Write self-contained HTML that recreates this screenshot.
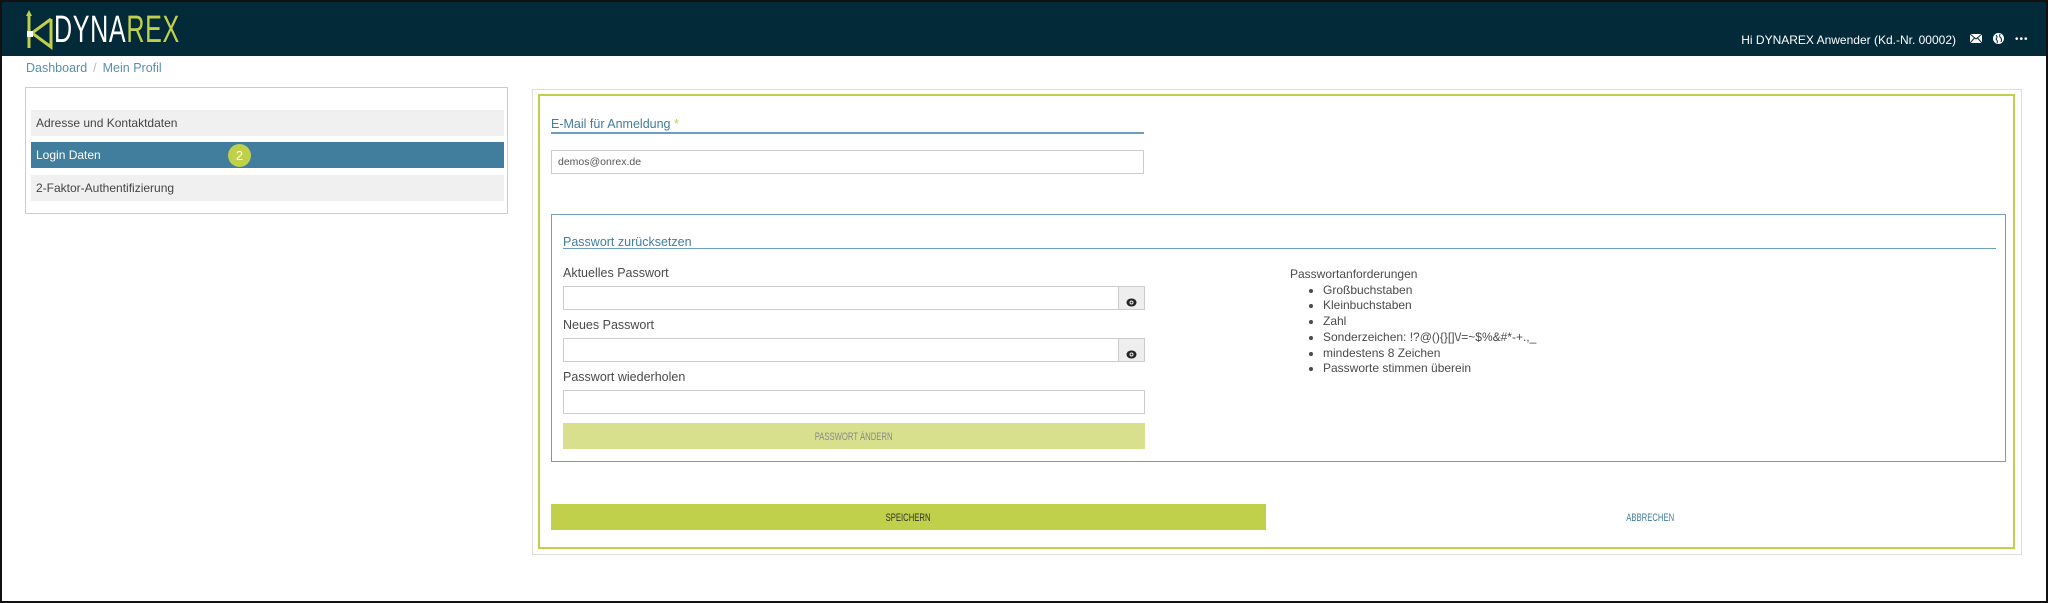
<!DOCTYPE html>
<html><head><meta charset="utf-8"><style>
*{box-sizing:border-box;margin:0;padding:0}
body{width:2048px;height:603px;overflow:hidden;background:#fff;font-family:"Liberation Sans",sans-serif;font-size:12px;color:#4a4a4a;position:relative}
.frame{position:absolute;left:0;top:0;width:2048px;height:603px;border:2px solid #111;pointer-events:none;z-index:9}
.hdr{position:absolute;left:0;top:0;width:2048px;height:56px;background:#032a38}
.abs{position:absolute}
.logo{left:54px;top:10px;height:40px;font-size:38px;line-height:40px;letter-spacing:1px;color:#fff;transform:scaleX(0.66);transform-origin:left;white-space:nowrap}
.logo b{font-weight:normal;color:#c0d04a}
.crumb{left:26px;top:61px;color:#5a8fae;font-size:12.5px}
.crumb span{color:#bbb;margin:0 6px}
.lp{left:25px;top:87px;width:483px;height:127px;border:1px solid #ccc}
.it{position:absolute;left:5px;width:473px;height:26px;background:#f0f0f0;line-height:26px;padding-left:5px;font-size:12px;color:#444}
.act{background:#417d9c;color:#fff}
.badge{position:absolute;left:197px;top:2px;width:23px;height:23px;border-radius:50%;background:#c0d04a;color:#fff;text-align:center;line-height:23px;font-size:13px}
.op{left:532px;top:89px;width:1490px;height:466px;border:1px solid #ddd}
.gp{left:538px;top:94px;width:1477px;height:455px;border:2px solid #c0d04a}
.lbl{color:#417d9c;font-size:12.5px}
.inp{border:1px solid #ccc;background:#fff;font-size:10.5px;line-height:22px;padding-left:6px;color:#555}
.eye{position:absolute;right:0;top:0;width:26px;height:100%;background:#eee;border-left:1px solid #ccc;text-align:center;padding-top:6px}
.fs{left:551px;top:214px;width:1455px;height:248px;border:1px solid #6e9fbb}
.cond{display:inline-block;transform:scaleX(0.7);font-size:11px}
ul{list-style:disc}
</style></head><body>
<div class="frame"></div>
<div class="hdr"></div>
<svg class="abs" style="left:26px;top:10px" width="28" height="40" viewBox="0 0 28 40"><g stroke="#c0d04a" stroke-width="3" fill="none"><path d="M3 4V38"/><path d="M25 9L6 23L25 37V9"/></g><path d="M3 0L0 6H6Z" fill="#c0d04a"/><rect x="1" y="21" width="6" height="6" fill="#fff"/></svg>
<div class="abs logo">DYNA<b>REX</b></div>
<div class="abs" style="right:92px;top:33px;color:#fff;font-size:12px">Hi DYNAREX Anwender (Kd.-Nr. 00002)</div>
<svg class="abs" style="left:1970px;top:34px" width="12" height="9" viewBox="0 0 12 9"><rect width="12" height="9" fill="#fff"/><path d="M0 0L6 5L12 0M0 9L4.5 4M12 9L7.5 4" stroke="#032a38" fill="none"/></svg>
<svg class="abs" style="left:1993px;top:33px" width="11" height="11" viewBox="0 0 11 11"><circle cx="5.5" cy="5.5" r="5.5" fill="#fff"/><path d="M3 2Q5 4 3 6Q5 8 4 10M7 1Q6 4 8 5Q9 7 8 9" stroke="#032a38" fill="none"/></svg>
<div class="abs" style="left:2015px;top:38px;color:#fff;font-size:10px;letter-spacing:1px;line-height:4px">•••</div>
<div class="abs crumb">Dashboard<span>/</span>Mein Profil</div>
<div class="abs lp">
<div class="it" style="top:22px">Adresse und Kontaktdaten</div>
<div class="it act" style="top:54px">Login Daten<div class="badge">2</div></div>
<div class="it" style="top:87px">2-Faktor-Authentifizierung</div>
</div>
<div class="abs op"></div>
<div class="abs gp"></div>
<div class="abs lbl" style="left:551px;top:117px">E-Mail für Anmeldung <span style="color:#c0d04a">*</span></div>
<div class="abs" style="left:551px;top:132px;width:593px;height:2px;background:#6e9fbb"></div>
<div class="abs inp" style="left:551px;top:150px;width:593px;height:24px">demos@onrex.de</div>
<div class="abs fs"></div>
<div class="abs lbl" style="left:563px;top:235px">Passwort zurücksetzen</div>
<div class="abs" style="left:563px;top:248px;width:1433px;height:1px;background:#6e9fbb"></div>
<div class="abs" style="left:563px;top:266px;font-size:12.5px">Aktuelles Passwort</div>
<div class="abs inp" style="left:563px;top:286px;width:582px;height:24px"><div class="eye"><svg width="11" height="9" viewBox="0 0 11 9"><ellipse cx="5.5" cy="4.5" rx="5" ry="4" fill="#222"/><circle cx="5.5" cy="4.5" r="2" fill="#eee"/><circle cx="5.5" cy="4.5" r="1" fill="#222"/></svg></div></div>
<div class="abs" style="left:563px;top:318px;font-size:12.5px">Neues Passwort</div>
<div class="abs inp" style="left:563px;top:338px;width:582px;height:24px"><div class="eye"><svg width="11" height="9" viewBox="0 0 11 9"><ellipse cx="5.5" cy="4.5" rx="5" ry="4" fill="#222"/><circle cx="5.5" cy="4.5" r="2" fill="#eee"/><circle cx="5.5" cy="4.5" r="1" fill="#222"/></svg></div></div>
<div class="abs" style="left:563px;top:370px;font-size:12.5px">Passwort wiederholen</div>
<div class="abs inp" style="left:563px;top:390px;width:582px;height:24px"></div>
<div class="abs" style="left:563px;top:423px;width:582px;height:26px;background:#d8e08e;text-align:center;line-height:26px;color:#888"><span class="cond">PASSWORT ÄNDERN</span></div>
<div class="abs" style="left:1290px;top:267px;font-size:12px;line-height:15.7px">Passwortanforderungen
<ul style="padding-left:33px">
<li>Großbuchstaben</li><li>Kleinbuchstaben</li><li>Zahl</li><li>Sonderzeichen: !?@(){}[]\/=~$%&amp;#*-+.,_</li><li>mindestens 8 Zeichen</li><li>Passworte stimmen überein</li></ul></div>
<div class="abs" style="left:551px;top:504px;width:715px;height:26px;background:#c0d04a;text-align:center;line-height:26px;color:#333"><span class="cond">SPEICHERN</span></div>
<div class="abs" style="left:1550px;top:504px;width:200px;height:26px;text-align:center;line-height:26px;color:#417d9c"><span class="cond">ABBRECHEN</span></div>
</body></html>
